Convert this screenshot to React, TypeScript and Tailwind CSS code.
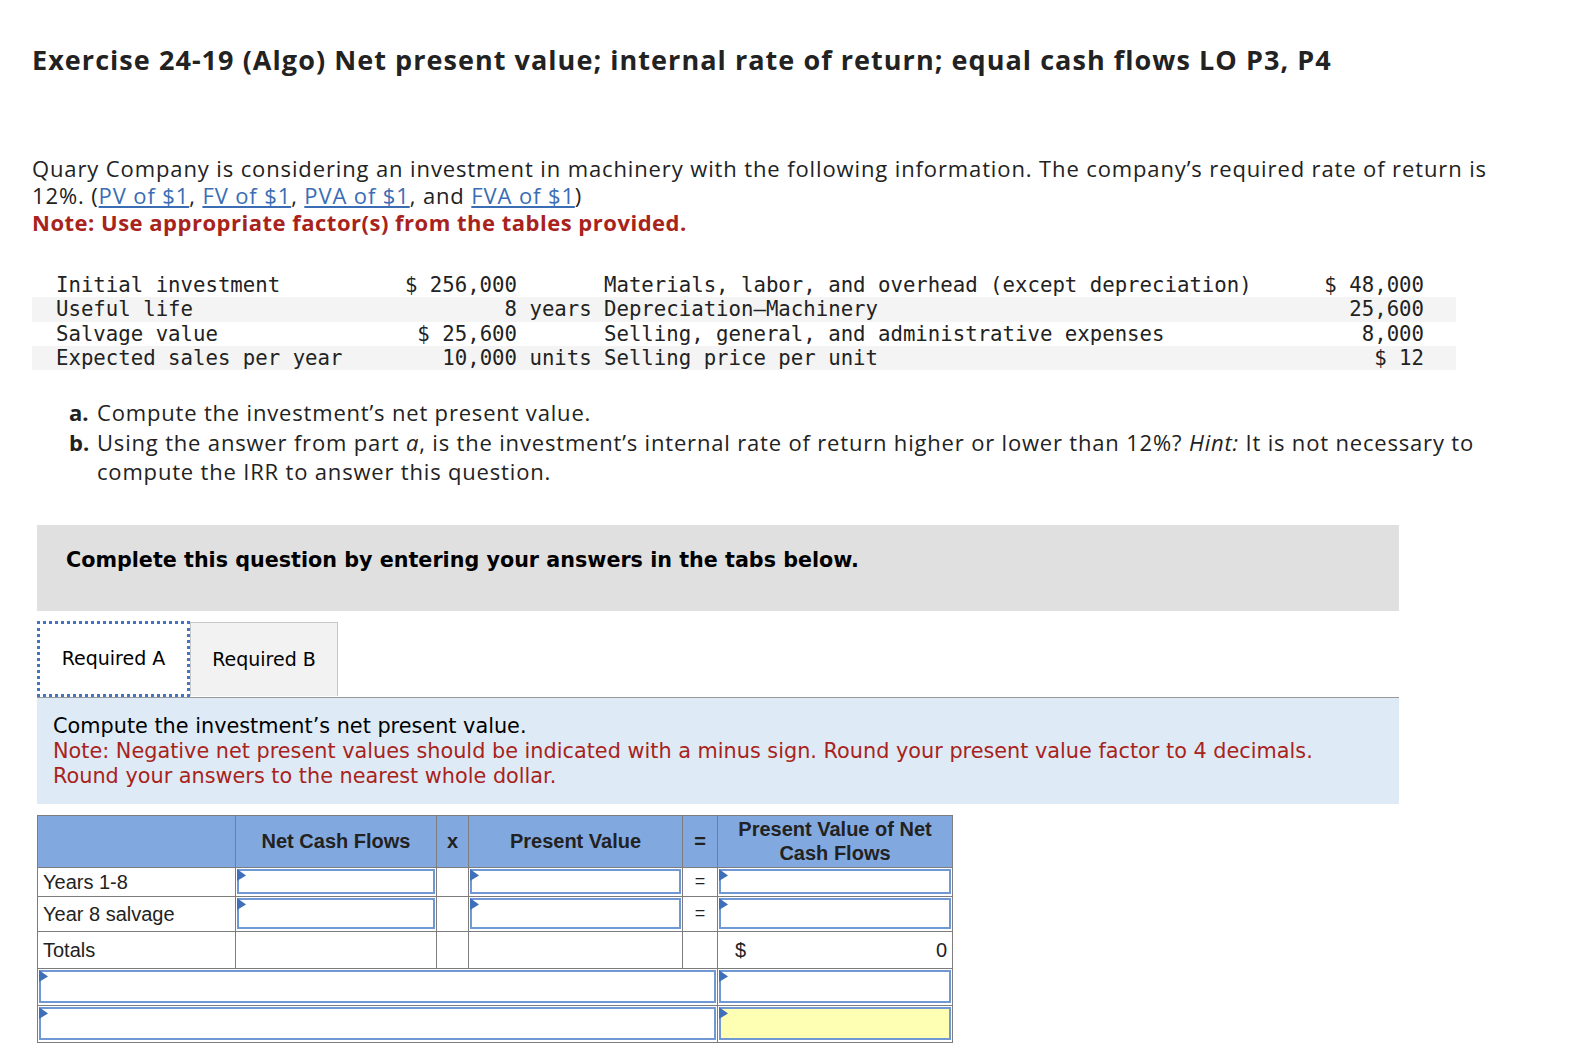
import React from 'react';

const dataRows = [
  { label: 'Initial investment', num: '$ 256,000', unit: '', desc: 'Materials, labor, and overhead (except depreciation)', amt: '$ 48,000' },
  { label: 'Useful life', num: '8', unit: 'years', desc: 'Depreciation\u2014Machinery', amt: '25,600' },
  { label: 'Salvage value', num: '$ 25,600', unit: '', desc: 'Selling, general, and administrative expenses', amt: '8,000' },
  { label: 'Expected sales per year', num: '10,000', unit: 'units', desc: 'Selling price per unit', amt: '$ 12' },
];

const InputBox = ({ h, yellow }: { h: number; yellow?: boolean }) => (
  <div
    className={`relative m-[1px] border-2 border-[#6f98d4] ${yellow ? 'bg-[#ffffb4]' : 'bg-white'}`}
    style={{ height: h }}
  >
    <svg className="absolute -left-[2px] -top-[2px]" width="10" height="13" viewBox="0 0 10 13">
      <path d="M0 0 L9 6.5 L0 12 Z" fill="#3f6fb8" />
    </svg>
  </div>
);

const Link = ({ children }: { children: React.ReactNode }) => (
  <span className="text-[#3a6db4] underline underline-offset-2">{children}</span>
);

export default function App() {
  return (
    <div className="w-[1580px] min-h-[1058px] bg-white text-[#222] font-['Open_Sans','Liberation_Sans',sans-serif]">
      <div className="px-[32px] pt-[42px]">
        <h1 className="text-[27px] font-bold leading-[36px] tracking-[1.05px] text-[#222] whitespace-nowrap">
          Exercise 24-19 (Algo) Net present value; internal rate of return; equal cash flows LO P3, P4
        </h1>

        <div className="mt-[77px] text-[22px] leading-[27px]">
          <p className="whitespace-nowrap tracking-[0.88px]">
            Quary Company is considering an investment in machinery with the following information. The company’s required rate of return is
            <br />
            12%. (<Link>PV of $1</Link>, <Link>FV of $1</Link>, <Link>PVA of $1</Link>, and <Link>FVA of $1</Link>)
          </p>
          <p className="font-bold tracking-[0.5px] text-[#a8231b]">Note: Use appropriate factor(s) from the tables provided.</p>
        </div>

        {/* data table */}
        <div className="mt-[37px] w-[1424px] font-['DejaVu_Sans_Mono',monospace] text-[20.7px] leading-[24.3px] text-[#222]">
          {dataRows.map((r, i) => (
            <div key={r.label} className={`flex h-[24.3px] items-center pl-[24px] ${i % 2 === 1 ? 'bg-[#f4f4f4]' : ''}`}>
              <div className="w-[345px] whitespace-pre">{r.label}</div>
              <div className="w-[116px] text-right whitespace-pre">{r.num}</div>
              <div className="w-[87px] whitespace-pre">{r.unit ? ' ' + r.unit : ''}</div>
              <div className="w-[650px] whitespace-pre">{r.desc}</div>
              <div className="w-[170px] text-right whitespace-pre">{r.amt}</div>
            </div>
          ))}
        </div>

        {/* questions */}
        <div className="mt-[28px] pl-[37px] text-[22px] leading-[29.5px] tracking-[0.82px]">
          <div className="flex">
            <span className="w-[28px] font-bold tracking-normal">a.</span>
            <span>Compute the investment’s net present value.</span>
          </div>
          <div className="flex">
            <span className="w-[28px] shrink-0 font-bold tracking-normal">b.</span>
            <span className="whitespace-nowrap">
              Using the answer from part <i>a</i>, is the investment’s internal rate of return higher or lower than 12%? <i>Hint:</i> It is not necessary to
              <br />
              compute the IRR to answer this question.
            </span>
          </div>
        </div>
      </div>

      {/* instructions box */}
      <div className="ml-[37px] mt-[38px] w-[1362px] h-[86px] bg-[#e0e0e0] pl-[29px] pt-[22px] font-['DejaVu_Sans',sans-serif] text-[20.7px] leading-[26px] font-bold text-black">
        Complete this question by entering your answers in the tabs below.
      </div>

      {/* tabs */}
      <div className="ml-[37px] mt-[10px] w-[1362px] flex items-end font-['DejaVu_Sans',sans-serif] text-[19px] text-black">
        <div className="h-[76px] w-[153px] border-[3px] border-dotted border-[#4274c2] flex items-center justify-center bg-white">
          Required A
        </div>
        <div className="h-[74px] w-[148px] border border-[#c8c8c8] border-b-0 bg-[#f2f2f2] flex items-center justify-center mb-[1px]">
          Required B
        </div>
      </div>

      {/* prompt box */}
      <div className="ml-[37px] w-[1362px] h-[107px] border-t border-[#999] bg-[#deebf7] px-[16px] pt-[16px] font-['DejaVu_Sans',sans-serif] text-[20.8px] leading-[25px]">
        <p className="text-black">Compute the investment’s net present value.</p>
        <p className="text-[#a8231b]">
          Note: Negative net present values should be indicated with a minus sign. Round your present value factor to 4 decimals.
          <br />
          Round your answers to the nearest whole dollar.
        </p>
      </div>

      {/* answer table */}
      <table className="ml-[37px] mt-[11px] w-[915px] table-fixed border-collapse font-['Liberation_Sans',Arial,sans-serif] text-[20px] text-[#222]">
        <colgroup>
          <col className="w-[198px]" />
          <col className="w-[201px]" />
          <col className="w-[32px]" />
          <col className="w-[214px]" />
          <col className="w-[35px]" />
          <col className="w-[235px]" />
        </colgroup>
        <tbody>
          <tr className="h-[52px] bg-[#82a9df] font-bold text-center">
            <td className="border border-[#7d7d7d]"></td>
            <td className="border border-[#7d7d7d]">Net Cash Flows</td>
            <td className="border border-[#7d7d7d]">x</td>
            <td className="border border-[#7d7d7d]">Present Value</td>
            <td className="border border-[#7d7d7d]">=</td>
            <td className="border border-[#7d7d7d] leading-[24px]">
              Present Value of Net
              <br />
              Cash Flows
            </td>
          </tr>
          <tr className="h-[29px]">
            <td className="border border-[#7d7d7d] pl-[5px] leading-[24px]">Years 1-8</td>
            <td className="border border-[#7d7d7d] p-0"><InputBox h={25} /></td>
            <td className="border border-[#7d7d7d]"></td>
            <td className="border border-[#7d7d7d] p-0"><InputBox h={25} /></td>
            <td className="border border-[#7d7d7d] text-center text-[18px]">=</td>
            <td className="border border-[#7d7d7d] p-0"><InputBox h={25} /></td>
          </tr>
          <tr className="h-[35px]">
            <td className="border border-[#7d7d7d] pl-[5px]">Year 8 salvage</td>
            <td className="border border-[#7d7d7d] p-0"><InputBox h={31} /></td>
            <td className="border border-[#7d7d7d]"></td>
            <td className="border border-[#7d7d7d] p-0"><InputBox h={31} /></td>
            <td className="border border-[#7d7d7d] text-center text-[18px]">=</td>
            <td className="border border-[#7d7d7d] p-0"><InputBox h={31} /></td>
          </tr>
          <tr className="h-[37px]">
            <td className="border border-[#7d7d7d] pl-[5px]">Totals</td>
            <td className="border border-[#7d7d7d]"></td>
            <td className="border border-[#7d7d7d]"></td>
            <td className="border border-[#7d7d7d]"></td>
            <td className="border border-[#7d7d7d]"></td>
            <td className="border border-[#7d7d7d] border-t-black px-[5px]">
              <div className="flex justify-between pl-[12px]">
                <span>$</span>
                <span>0</span>
              </div>
            </td>
          </tr>
          <tr className="h-[37px]">
            <td colSpan={5} className="border border-[#7d7d7d] p-0"><InputBox h={33} /></td>
            <td className="border border-[#7d7d7d] p-0"><InputBox h={33} /></td>
          </tr>
          <tr className="h-[37px]">
            <td colSpan={5} className="border border-[#7d7d7d] p-0"><InputBox h={33} /></td>
            <td className="border border-[#7d7d7d] p-0"><InputBox h={33} yellow /></td>
          </tr>
        </tbody>
      </table>
    </div>
  );
}
